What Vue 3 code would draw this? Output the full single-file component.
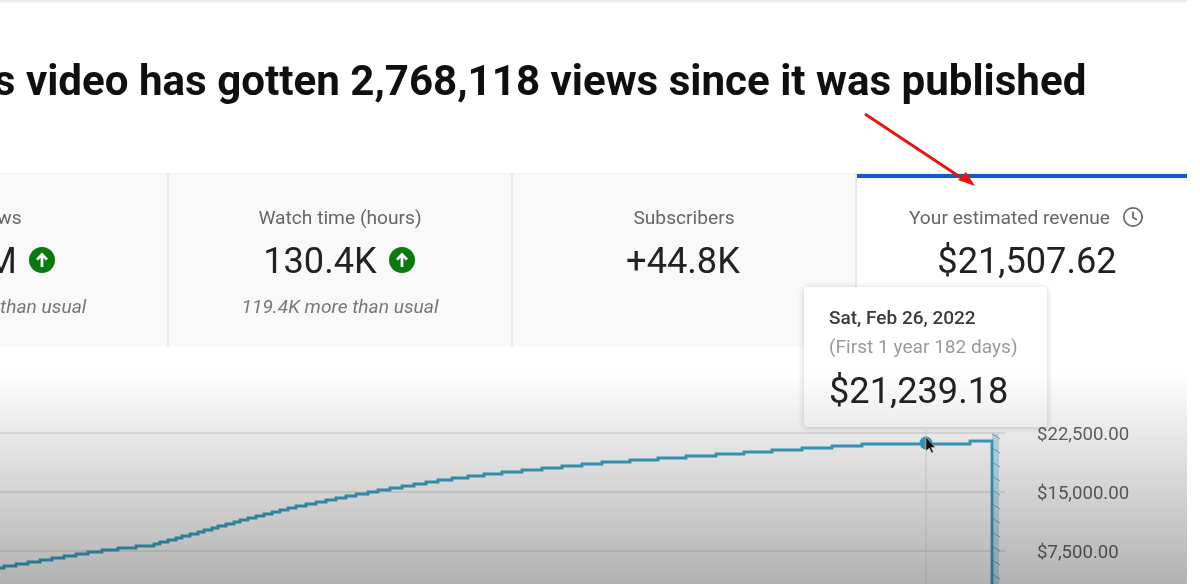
<script setup>
const cards = [
  { label: 'Views', value: '2.8M', up: true, note: '1.2M more than usual' },
  { label: 'Watch time (hours)', value: '130.4K', up: true, note: '119.4K more than usual' },
  { label: 'Subscribers', value: '+44.8K' },
  { label: 'Your estimated revenue', value: '$21,507.62', clock: true, active: true }
]

const knots = [
  [-2, 568], [50, 559], [100, 551], [152, 545], [200, 532], [250, 518], [300, 506],
  [350, 496], [400, 487], [450, 479], [500, 473], [600, 463], [700, 456], [800, 449],
  [860, 445], [926, 443], [968, 443]
]
function yAt(x) {
  for (let i = 1; i < knots.length; i++) {
    if (x <= knots[i][0]) {
      const [x0, y0] = knots[i - 1]
      const [x1, y1] = knots[i]
      return y0 + ((y1 - y0) * (x - x0)) / (x1 - x0)
    }
  }
  return 441
}
// The source line is a staircase: y moves in 2px steps.
let d = 'M-2 568'
let lastY = 568
for (let x = 0; x <= 968; x += 2) {
  const y = Math.round(yAt(x) / 2) * 2
  if (y !== lastY) {
    d += ` H${x} V${y}`
    lastY = y
  }
}
d += ' H970 V441 H992 V590'
const linePath = d

const hatches = Array.from({ length: 12 }, (_, i) => 434 + i * 14)
const ticks = [
  { y: 433, label: '$22,500.00' },
  { y: 492, label: '$15,000.00' },
  { y: 551, label: '$7,500.00' }
]
</script>

<template>
  <div class="page">
    <div class="main">
      <div class="topline"></div>
      <h1 class="title">This video has gotten 2,768,118 views since it was published</h1>
      <div class="cards">
        <div v-for="c in cards" :key="c.label" class="card" :class="{ active: c.active }">
          <div class="label">
            <span>{{ c.label }}</span>
            <svg v-if="c.clock" class="clock" viewBox="0 0 22 22" width="22" height="22">
              <circle cx="11" cy="11" r="9.2" fill="none" stroke="#666" stroke-width="1.7" />
              <path d="M11 5.5V11.4L15 13.8" fill="none" stroke="#666" stroke-width="1.7" />
            </svg>
          </div>
          <div class="value">
            <span>{{ c.value }}</span>
            <svg v-if="c.up" class="up" viewBox="0 0 26 26" width="26" height="26">
              <circle cx="13" cy="13" r="13" fill="#0a7a0c" />
              <path d="M13 20V8M8 12.6L13 7.4L18 12.6" fill="none" stroke="#fff" stroke-width="2.8" />
            </svg>
          </div>
          <div v-if="c.note" class="note">{{ c.note }}</div>
        </div>
      </div>
      <div class="chart">
        <svg class="plot" viewBox="0 347 1187 237" width="1187" height="237">
          <g stroke="#e2e2e2" stroke-width="1.5">
            <line x1="0" x2="1005" y1="433" y2="433" />
            <line x1="0" x2="1005" y1="492" y2="492" />
            <line x1="0" x2="1005" y1="551" y2="551" />
          </g>
          <line x1="926" x2="926" y1="430" y2="584" stroke="#e4e4e4" stroke-width="1.2" />
          <rect x="992" y="434" width="7" height="150" fill="#c4e4ee" />
          <g stroke="#8aa3ac" stroke-width="1">
            <line v-for="y in hatches" :key="y" x1="992" x2="1000" :y1="y" :y2="y + 5" />
          </g>
          <path :d="linePath" fill="none" stroke="#3ba3c6" stroke-width="2.8" />
          <circle cx="926" cy="443" r="6.5" fill="#3ba3c6" />
          <path d="M926 437V451L929.4 448L931.6 453L933.4 452L931.2 447.4H935.4Z" fill="#111" stroke="#fff" stroke-width="0.5" />
          <text v-for="t in ticks" :key="t.y" class="tick" x="1037" :y="t.y + 7">{{ t.label }}</text>
        </svg>
        <div class="tooltip">
          <div class="tip-date">Sat, Feb 26, 2022</div>
          <div class="tip-range">(First 1 year 182 days)</div>
          <div class="tip-value">$21,239.18</div>
        </div>
        <div class="shade"></div>
      </div>
      <svg class="arrow" viewBox="0 0 120 80" width="120" height="80">
        <path d="M5 4L100 67" stroke="#ec1010" stroke-width="2.8" fill="none" />
        <path d="M115 76L98 70L106 62Z" fill="#ec1010" />
      </svg>
    </div>
  </div>
</template>

<style scoped>
.page {
  width: 1200px;
  height: 584px;
  background: #fff;
  overflow: hidden;
  font-family: Roboto, "Liberation Sans", sans-serif;
}
.main {
  position: relative;
  width: 1187px;
  height: 584px;
  overflow: hidden;
  filter: blur(0.45px);
}
.topline {
  height: 2px;
  background: #eaeaea;
  width: 1200px;
}
.title {
  margin: 0 0 0 -67px;
  padding-top: 53px;
  height: 171px;
  box-sizing: border-box;
  font-size: 42.1px;
  line-height: 52px;
  font-weight: 700;
  color: #0f0f0f;
  white-space: nowrap;
}
.cards {
  display: flex;
  width: 1376px;
  margin-left: -175px;
  height: 174px;
  background: #f9f9f9;
  border-top: 1px solid #f1f1f1;
  box-sizing: border-box;
}
.card {
  width: 344px;
  box-sizing: border-box;
  border-right: 2px solid #e9e9e9;
  padding-top: 31px;
  display: flex;
  flex-direction: column;
  align-items: center;
}
.card:last-child {
  border-right: 0;
  padding-right: 2px;
}
.card.active {
  background: #fff;
  box-shadow: inset 0 4px 0 #1259cc;
}
.card.active .label {
  margin-right: 3px;
}
.label {
  display: flex;
  align-items: center;
  gap: 12px;
  height: 24px;
  font-size: 19.2px;
  color: #666;
}
.clock {
  display: block;
}
.value {
  display: flex;
  align-items: center;
  gap: 12px;
  margin-top: 9px;
  margin-right: 2px;
  height: 44px;
  font-size: 36.2px;
  color: #222;
}
.up {
  display: block;
}
.note {
  margin-top: 13px;
  font-size: 19.2px;
  font-style: italic;
  color: #777;
}
.chart {
  position: relative;
  height: 237px;
}
.plot {
  display: block;
}
.tick {
  font-family: Roboto, "Liberation Sans", sans-serif;
  font-size: 18.6px;
  fill: #666;
}
.tooltip {
  position: absolute;
  left: 804px;
  top: -60px;
  width: 243px;
  height: 140px;
  box-sizing: border-box;
  padding: 20px 0 0 25px;
  background: #fff;
  border-radius: 3px;
  box-shadow: 0 1px 6px rgba(0, 0, 0, 0.2);
}
.tip-date {
  font-size: 19px;
  line-height: 22px;
  font-weight: 500;
  color: #3a3a3a;
}
.tip-range {
  margin-top: 7px;
  font-size: 19.1px;
  line-height: 22px;
  color: #9a9a9a;
}
.tip-value {
  margin-top: 11px;
  font-size: 36.2px;
  line-height: 44px;
  color: #222;
}
.shade {
  position: absolute;
  inset: 0 0 0 0;
  background: linear-gradient(to bottom, rgba(0, 0, 0, 0) 10%, rgba(0, 0, 0, 0.3) 100%);
  pointer-events: none;
}
.arrow {
  position: absolute;
  left: 860px;
  top: 110px;
}
</style>
